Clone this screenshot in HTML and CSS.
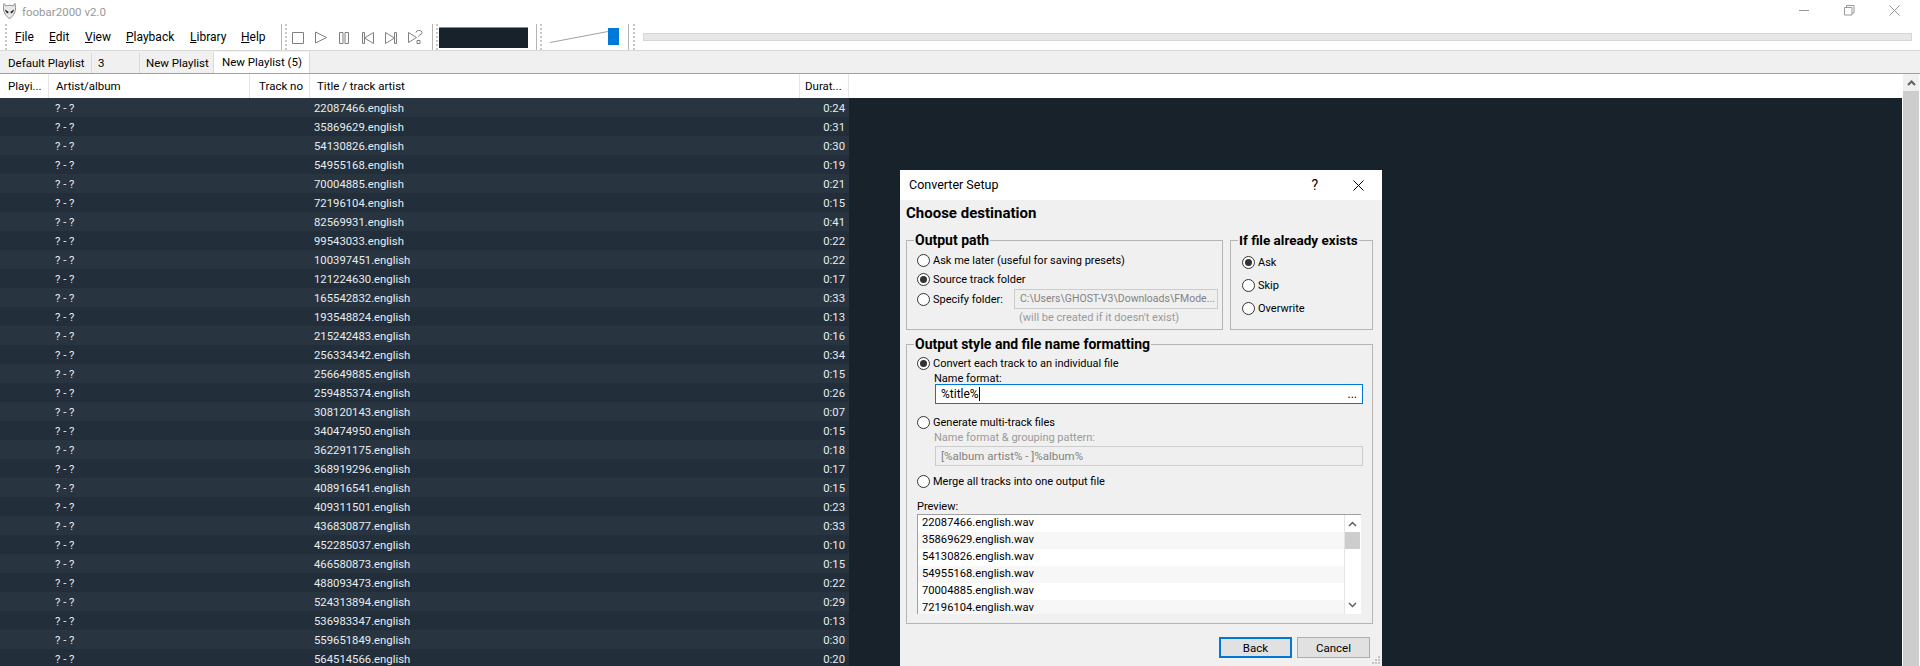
FILE: index.html
```html
<!DOCTYPE html>
<html lang="en">
<head>
  <meta charset="UTF-8" />
  <title>foobar2000 v2.0</title>
  <link rel="stylesheet" href="styles.css">
</head>
<body>

  <div class="titlebar">
    <svg class="app-icon" width="13" height="16" viewBox="0 0 13 16">
      <path d="M1 .5L3 3c2-1 5-1 7 0l2-2.500c.5 3 .8 5 .3 7-.7 3-3.800 7.500-5.800 8-2-.5-5.100-5-5.800-8C.2 5.500.5 3.500 1 .5z" fill="#e8e8e8" stroke="#8a8a8a"/>
      <path d="M2 6.500l3.500 2.200-.4 1.800C3.500 10 2.300 8.500 2 6.500zM11 6.500L7.500 8.700l.4 1.800c1.600-.5 2.800-2 3.100-4z" fill="#222"/>
    </svg>
    <span class="app-name">foobar2000 v2.0</span>
    <div class="win-buttons">
      <svg width="11" height="11" viewBox="0 0 11 11"><path d="M0 5.500h10" stroke="#999" fill="none"/></svg>
      <svg width="11" height="11" viewBox="0 0 11 11"><path d="M.5 2.500h7.500v7.500H.5zM2.500 2.500V.5H10v7.500H8" stroke="#999" fill="none"/></svg>
      <svg width="11" height="11" viewBox="0 0 11 11"><path d="M.5.500l10 10M10.500.500l-10 10" stroke="#999" fill="none"/></svg>
    </div>
  </div>

  <div class="toolbar">
    <span class="grip grip-first"></span>
    <div class="menu">
      <span><u>F</u>ile</span>
      <span><u>E</u>dit</span>
      <span><u>V</u>iew</span>
      <span><u>P</u>layback</span>
      <span><u>L</u>ibrary</span>
      <span><u>H</u>elp</span>
    </div>
    <span class="sep"></span>
    <span class="grip"></span>
    <div class="transport">
      <svg width="12" height="13" viewBox="0 0 12 13"><path d="M.5 1.500h11v11H.5z"/></svg>
      <svg width="12" height="13" viewBox="0 0 12 13"><path d="M.5 1l11 5.500-11 5.500z"/></svg>
      <svg width="12" height="13" viewBox="0 0 12 13"><path d="M1.500 1.500h3.500v11H1.500zM7 1.500h3.500v11H7z"/></svg>
      <svg class="after-pause" width="12" height="13" viewBox="0 0 12 13"><path d="M.5 1.500h2v11h-2zM11.500 1.500l-9 5.500 9 5.500z"/></svg>
      <svg width="12" height="13" viewBox="0 0 12 13"><path d="M11.500 1.500h-2v11h2zM.5 1.500l9 5.500-9 5.500z"/></svg>
      <svg width="15" height="15" viewBox="0 0 15 15"><path d="M.5 2.500l8 5-8 5zM8 2.500a3 2.300 0 1 1 4 2.300c-1 .6-1.500 1-1.500 2.200M9 10.500h3v3H9z"/></svg>
    </div>
    <span class="sep"></span>
    <span class="grip"></span>
    <div class="seek-display"></div>
    <span class="sep sep-seek"></span>
    <span class="grip"></span>
    <div class="volume">
      <svg width="58" height="12" viewBox="0 0 58 12"><path d="M0 11.500L58 .5" stroke="#a0a0a0" fill="none"/></svg>
      <span class="volume-thumb"></span>
    </div>
    <span class="sep sep-volume"></span>
    <span class="grip grip-last"></span>
    <div class="seekbar"></div>
  </div>

  <div class="tabs">
    <div class="tab tab-first">Default Playlist</div>
    <div class="tab tab-second">3</div>
    <div class="tab tab-third">New Playlist</div>
    <div class="tab tab-active">New Playlist (5)</div>
  </div>

  <div class="main">
    <div class="playlist">
      <div class="list-head">
        <div class="col col-playing">Playi...</div>
        <div class="col col-artist">Artist/album</div>
        <div class="col col-track">Track no</div>
        <div class="col col-title">Title / track artist</div>
        <div class="col col-duration">Durat...</div>
      </div>
      <div class="rows" id="rows"></div>
    </div>
    <div class="scrollbar">
      <div class="scroll-up"><svg width="9" height="6" viewBox="0 0 9 6"><path d="M1 5l3.500-3.500L8 5" stroke="#606060" stroke-width="2" fill="none"/></svg></div>
      <div class="scroll-thumb"></div>
    </div>
  </div>

  <div class="dialog">
    <div class="dialog-title">
      <span class="dialog-name">Converter Setup</span>
      <span class="dialog-help">?</span>
      <svg width="11" height="11" viewBox="0 0 11 11"><path d="M.5.500l10 10M10.500.500l-10 10" stroke="#000" fill="none"/></svg>
    </div>
    <div class="dialog-body">
      <h1>Choose destination</h1>

      <div class="group-row">
        <fieldset class="group group-path">
          <legend>Output path</legend>
          <label class="radio"><i></i>Ask me later (useful for saving presets)</label>
          <label class="radio"><i class="on"></i>Source track folder</label>
          <div class="folder-row">
            <label class="radio"><i></i>Specify folder:</label>
            <div class="field field-off field-folder">C:\Users\GHOST-V3\Downloads\FMode...</div>
          </div>
          <div class="hint">(will be created if it doesn't exist)</div>
        </fieldset>
        <fieldset class="group group-exists">
          <legend>If file already exists</legend>
          <label class="radio"><i class="on"></i>Ask</label>
          <label class="radio"><i></i>Skip</label>
          <label class="radio"><i></i>Overwrite</label>
        </fieldset>
      </div>

      <fieldset class="group group-style">
        <legend>Output style and file name formatting</legend>
        <label class="radio radio-convert"><i class="on"></i>Convert each track to an individual file</label>
        <div class="sub-label sub-first">Name format:</div>
        <div class="field field-focus"><span>%title%</span><b class="caret"></b><em>...</em></div>
        <label class="radio radio-multi"><i></i>Generate multi-track files</label>
        <div class="sub-label sub-off">Name format &amp; grouping pattern:</div>
        <div class="field field-off">[%album artist% - ]%album%</div>
        <label class="radio radio-merge"><i></i>Merge all tracks into one output file</label>
        <div class="preview-label">Preview:</div>
        <div class="preview">
          <div class="preview-rows">
            <div>22087466.english.wav</div>
            <div>35869629.english.wav</div>
            <div>54130826.english.wav</div>
            <div>54955168.english.wav</div>
            <div>70004885.english.wav</div>
            <div>72196104.english.wav</div>
          </div>
          <div class="preview-scroll">
            <svg width="9" height="6" viewBox="0 0 9 6"><path d="M1 5l3.500-3.500L8 5" stroke="#606060" stroke-width="1.500" fill="none"/></svg>
            <span class="preview-thumb"></span>
            <svg width="9" height="6" viewBox="0 0 9 6"><path d="M1 1l3.500 3.500L8 1" stroke="#606060" stroke-width="1.500" fill="none"/></svg>
          </div>
        </div>
      </fieldset>

      <div class="buttons">
        <button class="btn btn-default">Back</button>
        <button class="btn">Cancel</button>
      </div>
    </div>
    <svg class="grip-corner" width="8" height="8" viewBox="0 0 8 8"><path d="M6 0h2v2H6zM3 3h2v2H3zM6 3h2v2H6zM0 6h2v2H0zM3 6h2v2H3zM6 6h2v2H6z" fill="#c4c4c4"/></svg>
  </div>

  <script>
    const tracks = [
      ['22087466', '0:24'], ['35869629', '0:31'], ['54130826', '0:30'], ['54955168', '0:19'],
      ['70004885', '0:21'], ['72196104', '0:15'], ['82569931', '0:41'], ['99543033', '0:22'],
      ['100397451', '0:22'], ['121224630', '0:17'], ['165542832', '0:33'], ['193548824', '0:13'],
      ['215242483', '0:16'], ['256334342', '0:34'], ['256649885', '0:15'], ['259485374', '0:26'],
      ['308120143', '0:07'], ['340474950', '0:15'], ['362291175', '0:18'], ['368919296', '0:17'],
      ['408916541', '0:15'], ['409311501', '0:23'], ['436830877', '0:33'], ['452285037', '0:10'],
      ['466580873', '0:15'], ['488093473', '0:22'], ['524313894', '0:29'], ['536983347', '0:13'],
      ['559651849', '0:30'], ['564514566', '0:20']
    ];

    const rows = document.getElementById('rows');
    let html = '';
    for (const [name, time] of tracks) {
      html += `<div class="row">
        <div class="col col-playing"></div>
        <div class="col col-artist">? - ?</div>
        <div class="col col-track"></div>
        <div class="col col-title">${name}.english</div>
        <div class="col col-duration">${time}</div>
      </div>`;
    }
    rows.innerHTML = html;
  </script>
</body>
</html>
```

FILE: styles.css
```css
body {
  margin: 0;
  height: 666px;
  overflow: hidden;
  background: #fff;
  color: #000;
  font-family: Roboto, sans-serif;
  font-size: 11.5px;
}

/* window chrome */
.titlebar {
  height: 24px;
  display: flex;
  align-items: center;
  padding-left: 3px;
}
.app-icon {
  margin-right: 6px;
  margin-bottom: 3px;
}
.app-name {
  color: #999;
  font-size: 11.5px;
}
.win-buttons {
  margin-left: auto;
  margin-bottom: 4px;
  display: flex;
  gap: 34px;
  padding-right: 20px;
}

.toolbar {
  height: 26px;
  display: flex;
  align-items: center;
  padding-left: 5px;
}
.grip {
  width: 2px;
  height: 26px;
  flex: none;
  margin-left: 3px;
  background: repeating-linear-gradient(#c8c8c8 0 2px, transparent 2px 4px);
}
.grip-first {
  margin-left: 0;
}
.grip-last {
  margin-left: 4px;
}
.sep {
  width: 1px;
  height: 26px;
  background: #b4b4b4;
  flex: none;
}
.menu {
  display: grid;
  grid-template-columns: 34px 36px 41px 64px 51px 40px;
  margin-left: 8px;
  font-size: 12px;
}
.transport {
  display: flex;
  align-items: center;
  gap: 11px;
  margin-left: 5px;
  width: 140px;
}
.transport svg {
  fill: none;
  stroke: #808080;
}
.transport .after-pause {
  margin-left: 1px;
}
.seek-display {
  width: 89px;
  height: 21px;
  margin-left: 1px;
  box-sizing: border-box;
  background: #18222b;
  border-top: 1px solid #8a8a8a;
  flex: none;
}
.sep-seek {
  margin-left: 8px;
}
.volume {
  position: relative;
  width: 69px;
  height: 26px;
  margin-left: 8px;
  display: flex;
  align-items: center;
  flex: none;
}
.volume-thumb {
  position: absolute;
  left: 58px;
  top: 4px;
  width: 11px;
  height: 17px;
  background: #0078d7;
}
.sep-volume {
  margin-left: 9px;
}
.seekbar {
  width: 1269px;
  height: 8px;
  margin-left: 8px;
  background: #e6e8e8;
  border: 1px solid #d6d6d6;
  box-sizing: border-box;
  flex: none;
}

.tabs {
  height: 24px;
  box-sizing: border-box;
  background: #f0f0f0;
  border-top: 1px solid #d9d9d9;
  border-bottom: 1px solid #a0a0a0;
  display: flex;
  padding-left: 2px;
}
.tab {
  margin-top: 2px;
  line-height: 21px;
  padding-left: 6px;
  border-right: 1px solid #d9d9d9;
  box-sizing: border-box;
  white-space: nowrap;
}
.tab-first { width: 90px; }
.tab-second { width: 48px; }
.tab-third { width: 74px; }
.tab-active {
  width: 96px;
  margin-top: 1px;
  background: #fff;
  line-height: 21px;
  padding-left: 8px;
}

/* playlist */
.main {
  display: flex;
  height: 592px;
}
.playlist {
  flex: 1;
  background: #18222b;
  overflow: hidden;
}
.list-head {
  height: 24px;
  display: flex;
  background: #fff;
  line-height: 24px;
}
.list-head .col {
  border-right: 1px solid #e5e5e5;
}
.col {
  box-sizing: border-box;
  white-space: nowrap;
  flex: none;
  overflow: hidden;
}
.col-playing { width: 49px; padding-left: 8px; }
.col-artist { width: 201px; padding-left: 7px; }
.col-track { width: 60px; text-align: right; padding-right: 6px; }
.col-title { width: 490px; padding-left: 7px; }
.col-duration { width: 49px; padding-left: 5px; }

.rows {
  color: #e8ecef;
  width: 849px;
}
.row {
  display: flex;
  height: 19px;
  line-height: 21px;
  font-size: 11.3px;
  background: #283540;
}
.row:nth-child(even) {
  background: #222e39;
}
.row .col-artist { padding-left: 6px; }
.row .col-title { padding-left: 4px; }
.row .col-duration { text-align: right; padding-right: 4px; }

.scrollbar {
  width: 16px;
  margin: 0 1px;
  display: flex;
  flex-direction: column;
  flex: none;
}
.scroll-up {
  height: 17px;
  display: flex;
  align-items: center;
  justify-content: center;
  background: #f0f0f0;
}
.scroll-thumb {
  flex: 1;
  background: #cdcdcd;
}

/* converter dialog */
.dialog {
  position: absolute;
  left: 900px;
  top: 170px;
  width: 482px;
  height: 496px;
  background: #f0f0f0;
  color: #000;
  font-size: 11px;
}
.dialog-title {
  height: 30px;
  background: #fff;
  display: flex;
  align-items: center;
  padding: 0 18px 0 9px;
}
.dialog-name {
  font-size: 12.5px;
  margin-bottom: 2px;
}
.dialog-help {
  margin-left: auto;
  margin-right: 35px;
  font-size: 14px;
}
.dialog-body {
  padding: 0 9px 0 6px;
}
h1 {
  margin: 0;
  height: 32px;
  line-height: 26px;
  font-size: 15px;
  font-weight: bold;
}
.group-row {
  display: flex;
  gap: 7px;
}
.group {
  margin: 0;
  padding: 0 0 0 10px;
  border: 1px solid #b5b5b5;
  box-sizing: border-box;
  min-width: 0;
}
legend {
  font-size: 14px;
  font-weight: bold;
  line-height: 16px;
  padding: 0 1px;
  margin-left: -3px;
}
.group-path {
  width: 317px;
  height: 98px;
}
.group-exists {
  width: 143px;
  height: 98px;
  padding-left: 11px;
}
.group-exists legend {
  margin-left: -4px;
  font-size: 13.5px;
}
.radio {
  display: flex;
  align-items: center;
  height: 19px;
  white-space: nowrap;
}
.radio i {
  width: 11px;
  height: 11px;
  border: 1px solid #333;
  border-radius: 50%;
  background: #fff;
  margin-right: 3px;
  flex: none;
  position: relative;
}
.radio i.on::after {
  content: "";
  position: absolute;
  left: 2px;
  top: 2px;
  width: 7px;
  height: 7px;
  border-radius: 50%;
  background: #333;
}
.group-path .radio:first-of-type {
  margin-top: 2px;
  height: 20px;
}
.folder-row {
  display: flex;
  align-items: center;
  height: 19px;
}
.folder-row .radio {
  width: 97px;
  flex: none;
}
.field {
  height: 20px;
  line-height: 18px;
  box-sizing: border-box;
  padding-left: 5px;
  white-space: nowrap;
  overflow: hidden;
  display: flex;
  margin-right: 9px;
  font-size: 11.5px;
}
.field-off {
  border: 1px solid #ccc;
  background: #efefef;
  color: #838383;
}
.field-folder {
  width: 204px;
  flex: none;
  margin: 0;
  font-size: 10.5px;
}
.field-focus {
  border: 1px solid #0078d7;
  background: #fff;
  padding-right: 5px;
  font-size: 12px;
}
.field-focus em {
  margin-left: auto;
  font-style: normal;
}
.caret {
  width: 1px;
  height: 14px;
  margin-top: 2px;
  background: #000;
}
.hint {
  color: #9a9a9a;
  padding-left: 102px;
  line-height: 20px;
}
.group-exists .radio {
  height: 23px;
}
.group-exists .radio:first-of-type {
  margin-top: 3px;
}
.group-style {
  width: 467px;
  height: 288px;
  margin-top: 6px;
}
.sub-label {
  padding-left: 17px;
  line-height: 14px;
  height: 14px;
}
.sub-first {
  margin-bottom: -2px;
}
.sub-off {
  color: #9a9a9a;
  margin-top: -1px;
  margin-bottom: 1px;
}
.group-style .field {
  margin-left: 18px;
}
.radio-convert {
  margin-top: 2px;
  height: 18px;
}
.radio-multi {
  margin-top: 9px;
}
.radio-merge {
  margin-top: 6px;
}
.preview-label {
  height: 15px;
  line-height: 15px;
  margin-top: 8px;
}
.preview {
  width: 444px;
  height: 100px;
  display: flex;
  background: #fff;
  border-top: 1px solid #a0a0a0;
  border-left: 1px solid #a0a0a0;
  box-sizing: border-box;
  overflow: hidden;
}
.preview-rows {
  flex: 1;
}
.preview-rows div {
  height: 17px;
  line-height: 16px;
  padding-left: 4px;
  font-size: 11.2px;
}
.preview-rows div:nth-child(even) {
  background: #f7f7f7;
}
.preview-scroll {
  width: 16px;
  margin-right: 1px;
  border-left: 1px solid #e5e5e5;
  display: flex;
  flex-direction: column;
  align-items: center;
  padding: 6px 0;
  box-sizing: border-box;
}
.preview-thumb {
  width: 15px;
  height: 17px;
  background: #cdcdcd;
  margin-top: 5px;
  margin-bottom: auto;
}
.buttons {
  display: flex;
  justify-content: flex-end;
  gap: 5px;
  margin-top: 13px;
  margin-right: 3px;
}
.btn {
  width: 73px;
  height: 21px;
  box-sizing: border-box;
  padding: 0;
  background: #e1e1e1;
  border: 1px solid #adadad;
  font: inherit;
  font-size: 11.5px;
  color: #000;
}
.btn-default {
  border: 2px solid #0078d7;
}
.grip-corner {
  position: absolute;
  right: 2px;
  bottom: 2px;
}
```
